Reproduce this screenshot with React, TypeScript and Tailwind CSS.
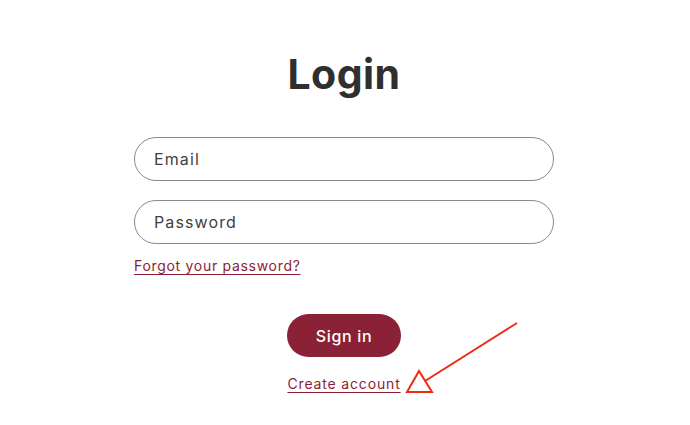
import React from "react";

export default function App() {
  return (
    <div className="relative w-[690px] h-[425px] bg-white overflow-hidden" style={{ fontFamily: "Inter, 'Noto Sans', sans-serif" }}>
      <div className="flex flex-col items-center pt-[48px] pr-[2px]">
        <h1 className="text-[41px] leading-[52px] font-bold text-[#2f2f2f] tracking-[0.01em]">Login</h1>
        <div className="w-[420px] mt-[37px] flex flex-col">
          <div className="h-[44px] rounded-full border border-[#8a8a8a] flex items-center px-[19px] text-[16px] tracking-[0.07em] text-[#3f3f3f]">Email</div>
          <div className="h-[44px] mt-[19px] rounded-full border border-[#8a8a8a] flex items-center px-[19px] text-[16px] tracking-[0.07em] text-[#3f3f3f]">Password</div>
          <a className="self-start mt-[12px] text-[14px] leading-[20px] tracking-[0.05em] text-[#8c1d35] underline underline-offset-[3px] decoration-[1px]">Forgot your password?</a>
        </div>
        <button className="mt-[38px] w-[114px] h-[43px] rounded-full bg-[#8b2136] text-white text-[16px] tracking-[0.04em] font-medium">Sign in</button>
        <a className="mt-[17px] text-[14px] leading-[20px] tracking-[0.06em] text-[#8c1d35] underline underline-offset-[3px] decoration-[1px]">Create account</a>
      </div>
      <svg className="absolute left-0 top-0" width="690" height="425" viewBox="0 0 690 425">
        <line x1="517" y1="323" x2="425" y2="381" stroke="#ee2a12" strokeWidth="2" />
        <polygon points="407,392 419,371 432,392" fill="none" stroke="#ee2a12" strokeWidth="2" strokeLinejoin="miter" />
      </svg>
    </div>
  );
}
